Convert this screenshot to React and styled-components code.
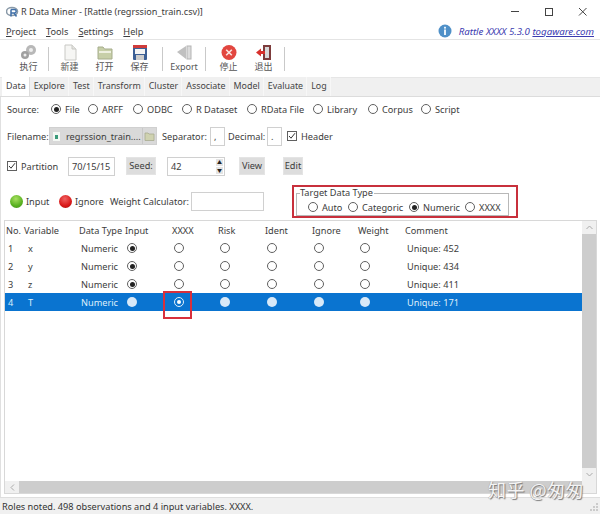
import React from "react";
import styled, { createGlobalStyle } from "styled-components";

const Global = createGlobalStyle`
  html, body { margin: 0; padding: 0; background: #fff; }
  * { box-sizing: border-box; }
  body { font-family: "Noto Sans", "Noto Sans CJK SC", sans-serif; font-size: 9.2px; color: #3c3c3c; }
`;

const Win = styled.div`
  position: relative; width: 600px; height: 514px; overflow: hidden; background: #fff;
  display: flex; flex-direction: column;
`;
const TitleBar = styled.div`
  height: 23px; display: flex; align-items: center; padding: 0 0 0 6px; flex: none; font-size: 9.1px;
`;
const TitleText = styled.span`margin-left: 2px; flex: 1; white-space: nowrap;`;
const WinButtons = styled.div`display: flex; align-items: center;`;
const WinButton = styled.div`width: 34px; height: 22px; display: flex; align-items: center; justify-content: center; margin-right: ${p => p.$mr || 0}px;`;
const MenuBar = styled.div`
  height: 17px; display: flex; align-items: center; padding: 0 6px 0 6px; gap: 10px; flex: none;
  border-bottom: 1px solid #e4e4e4;
`;
const MenuItem = styled.span`display: inline-block; &::first-letter { text-decoration: underline; }`;
const Spacer = styled.div`flex: 1;`;
const About = styled.span`font-style: italic; color: #3b3bb0; margin-left: -3px; font-size: 9.7px; white-space: nowrap;`;
const AboutLink = styled.span`text-decoration: underline;`;
const Toolbar = styled.div`
  height: 37px; display: flex; align-items: center; padding-left: 11px; flex: none;
`;
const Tool = styled.div`
  width: ${p => p.$w || 35}px; display: flex; flex-direction: column; align-items: center; font-size: 9px; color: #555;
  line-height: 12px;
  svg { display: block; }
`;
const ToolSep = styled.div`width: 1px; height: 24px; background: #c9c9c9; margin: 0 ${p => p.$mr}px 0 ${p => p.$ml}px;`;
const TabBar = styled.div`
  height: 20px; background: #f0f0f0; display: flex; align-items: flex-end; padding-left: 2px; flex: none;
  border-top: 1px solid #e6e6e6; border-bottom: 1px solid #dcdcdc;
`;
const Tab = styled.div`
  height: 19px; line-height: 18px; padding: 0 3px 0 4px; background: ${p => p.$active ? "#fff" : "#f0f0f0"};
  border-right: 1px solid ${p => p.$active ? "#dcdcdc" : "#f7f7f7"};
  color: #444; white-space: nowrap; font-size: 8.9px;
`;
const Content = styled.div`
  flex: 1; display: flex; flex-direction: column; min-height: 0;
  border-left: 1px solid #e0e0e0;
`;
const Row = styled.div`
  display: flex; align-items: center; height: ${p => p.$h}px; margin-top: ${p => p.$mt || 0}px; padding-left: ${p => p.$pl ?? 6}px; flex: none; white-space: nowrap;
`;
const Label = styled.span`display: inline-block; flex: none; width: ${p => p.$w ? p.$w + "px" : "auto"}; margin-left: ${p => p.$ml || 0}px;`;
const RadioCircle = styled.span`
  display: inline-block; width: 10px; height: 10px; border-radius: 50%; flex: none; background: #fff;
  border: 1px solid #606060; position: relative;
  &::after {
    content: ""; display: ${p => p.$on ? "block" : "none"}; position: absolute; left: 1.5px; top: 1.5px; width: 5px; height: 5px; border-radius: 50%; background: #222;
  }
`;
const RadioItem = styled.span`display: inline-flex; align-items: center; gap: 4px; flex: none; width: ${p => p.$w ? p.$w + "px" : "auto"};`;
const Check = styled.span`
  width: 10px; height: 10px; border: 1px solid #606060; display: inline-flex; align-items: center; justify-content: center; flex: none; background: #fff;
`;
const TextBox = styled.div`
  width: ${p => p.$w}px; height: 19px; border: 1px solid #d0d0d0; background: #fff; line-height: 17px; padding-left: 3px; flex: none;
  margin-right: ${p => p.$mr || 0}px;
`;
const Chooser = styled.div`
  width: 108px; height: 18px; background: #d9d9d9; border: 1px solid #d0d0d0; display: flex; align-items: center; padding-left: 3px; margin-right: 5px; flex: none;
`;
const ChooserText = styled.span`flex: 1; margin-left: 6px; overflow: hidden;`;
const ChooserEnd = styled.div`width: 14px; flex: none; height: 100%; border-left: 1px solid #c8c8c8; display: flex; align-items: center; justify-content: center;`;
const Btn = styled.div`
  height: 18px; width: ${p => p.$w}px; background: #dddddd; border: 1px solid #e4e4e4; line-height: 16px; text-align: center; flex: none;
  margin-right: ${p => p.$mr || 0}px;
`;
const Spin = styled.div`
  width: 58px; height: 19px; border: 1px solid #d0d0d0; margin: 0 14px 0 11px; display: flex; align-items: center; padding-left: 3px; flex: none;
`;
const SpinVal = styled.span`flex: 1;`;
const SpinArrows = styled.div`width: 7px; height: 15px; margin-right: 1px; display: flex; flex-direction: column; gap: 1px;`;
const SpinArrow = styled.div`flex: 1; background: #e4e4e4; display: flex; align-items: center; justify-content: center; color: #222; font-size: 5px; line-height: 1;`;
const Ball = styled.span`
  width: 13px; height: 13px; border-radius: 50%; flex: none; display: inline-block;
  background: radial-gradient(circle at 45% 30%, ${p => p.$a} 0%, ${p => p.$b} 60%, ${p => p.$c} 100%);
`;
const RedBox = styled.div`
  width: 226px; height: 33px; border: 2px solid #c8303c; margin-left: 28px; padding: 6px 2px 0 2px; flex: none;
`;
const Group = styled.div`
  position: relative; width: 213px; height: 23px; border: 1px solid #b8b8b8; display: flex; align-items: center; padding: 5px 0 0 11px;
`;
const GroupTitle = styled.span`position: absolute; left: 3px; top: -7px; background: #fff; line-height: 12px; padding: 0 1px 0 0;`;
const TablePanel = styled.div`
  flex: 1; margin: 2px 3px 3px; border: 1px solid #d8d8d8; display: grid; grid-template-columns: 1fr 14px; grid-template-rows: 1fr 12px; min-height: 0;
`;
const Sheet = styled.div`display: flex; flex-direction: column; min-height: 0; padding-top: 1px;`;
const GridRow = styled.div`
  display: grid; grid-template-columns: 19px 55px 46px 47px 46px 47px 47px 46px 47px 1fr;
  align-items: center; height: ${p => p.$h || 18}px; flex: none;
  background: ${p => p.$sel ? "#0a74d0" : "transparent"}; color: ${p => p.$sel ? "#dfeefa" : "inherit"};
`;
const Cell = styled.span`padding-left: ${p => p.$pl || 0}px; white-space: nowrap;`;
const RadioCell = styled.span`padding-left: 2px; display: flex; align-items: center;`;
const SelRadio = styled.span`
  width: 10px; height: 10px; border-radius: 50%; display: block; background: #d8e9f8;
`;
const SelRadioOn = styled.span`
  width: 10px; height: 10px; border-radius: 50%; display: block; background: #0a74d0; border: 1px solid #e6f2fb; position: relative;
  &::after { content: ""; position: absolute; left: 2px; top: 2px; width: 4px; height: 4px; border-radius: 50%; background: #fff; }
`;
const VScroll = styled.div`background: #f0f0f0; display: flex; flex-direction: column; align-items: center;`;
const ScrollEnd = styled.div`height: ${p => p.$h}px; width: 100%; display: flex; align-items: center; justify-content: center; flex: none; background: #f0f0f0;`;
const VThumb = styled.div`flex: 1; width: 100%; background: #cdcdcd;`;
const HScroll = styled.div`background: #f0f0f0; display: flex; align-items: stretch;`;
const HEnd = styled.div`width: 14px; flex: none; display: flex; align-items: center; justify-content: center;`;
const HThumb = styled.div`flex: 1; background: #cdcdcd;`;
const Corner = styled.div`background: #f0f0f0;`;
const StatusBar = styled.div`
  height: 17px; flex: none; display: flex; align-items: center; padding-left: 2px; background: #f0f0f0; border-top: 1px solid #dedede; position: relative; color: #333;
`;
const Grip = styled.svg`position: absolute; right: 2px; bottom: 2px;`;
const Marker = styled.div`
  position: absolute; left: 163px; top: 291px; width: 29px; height: 28px; border: 2px solid #d8303c; pointer-events: none;
`;
const Watermark = styled.div`
  position: absolute; left: 488px; top: 479px; font-size: 18px; line-height: 21px; color: #f4f4f4; white-space: nowrap; letter-spacing: 0.5px;
  text-shadow: 1px 1px 1px #777, -0.5px -0.5px 0 #aaa; font-family: "Noto Sans CJK SC", sans-serif;
`;

const Chk = () => (
  <Check><svg width="8" height="8" viewBox="0 0 8 8"><path d="M1 4l2 2.2L7 1.2" fill="none" stroke="#333" strokeWidth="1"/></svg></Check>
);
const Chev = ({ d }) => (
  <svg width="7" height="5" viewBox="0 0 7 5"><path d={d} fill="none" stroke="#aaa" strokeWidth="1"/></svg>
);

const tabs = ["Data", "Explore", "Test", "Transform", "Cluster", "Associate", "Model", "Evaluate", "Log"];
const rows = [["1", "x", "452"], ["2", "y", "434"], ["3", "z", "411"]];
const blanks = [0, 1, 2, 3, 4];
const selBlanks = [0, 1, 2, 3];

export default function App() {
  return (
    <Win>
      <Global />
      <TitleBar>
        <svg width="13" height="12" viewBox="0 0 13 12">
          <ellipse cx="6" cy="5.5" rx="5.5" ry="4" fill="none" stroke="#8a9aa8" strokeWidth="1.6"/>
          <path d="M5 3.5v7M5 3.5h3.5a1.6 1.6 0 0 1 0 3.4H5M8 7l2.5 3.5" fill="none" stroke="#3f6fa8" strokeWidth="1.5"/>
        </svg>
        <TitleText>R Data Miner - [Rattle (regrssion_train.csv)]</TitleText>
        <WinButtons>
          <WinButton><svg width="9" height="9" viewBox="0 0 9 9"><path d="M1 4.5h8" stroke="#444"/></svg></WinButton>
          <WinButton><svg width="9" height="9" viewBox="0 0 9 9"><rect x="1.5" y="1.5" width="7" height="7" fill="none" stroke="#444"/></svg></WinButton>
          <WinButton $mr={1}><svg width="9" height="9" viewBox="0 0 9 9"><path d="M1 1l7.5 7.5M8.5 1L1 8.5" stroke="#444"/></svg></WinButton>
        </WinButtons>
      </TitleBar>
      <MenuBar>
        <MenuItem>Project</MenuItem>
        <MenuItem>Tools</MenuItem>
        <MenuItem>Settings</MenuItem>
        <MenuItem>Help</MenuItem>
        <Spacer />
        <svg width="14" height="14" viewBox="0 0 14 14">
          <circle cx="7" cy="7" r="6.5" fill="#4f90c8"/>
          <rect x="6" y="5.5" width="2" height="5.5" fill="#e8f2fa"/>
          <rect x="6" y="2.8" width="2" height="1.8" fill="#e8f2fa"/>
        </svg>
        <About>Rattle XXXX 5.3.0 <AboutLink>togaware.com</AboutLink></About>
      </MenuBar>
      <Toolbar>
        <Tool>
          <svg width="18" height="17" viewBox="0 0 18 17">
            <circle cx="11" cy="6" r="5" fill="#b8b8b8"/><circle cx="11" cy="6" r="2" fill="#eee"/>
            <circle cx="5" cy="11" r="4" fill="#a0a0a0"/><circle cx="5" cy="11" r="1.5" fill="#eee"/>
          </svg>
          执行
        </Tool>
        <ToolSep $ml={2} $mr={3} />
        <Tool>
          <svg width="18" height="17" viewBox="0 0 18 17"><path d="M4 1h7l4 4v11H4z" fill="#f6f6f4" stroke="#c8c8c4"/><path d="M11 1v4h4" fill="#e4e4e0" stroke="#c8c8c4"/></svg>
          新建
        </Tool>
        <Tool>
          <svg width="18" height="17" viewBox="0 0 18 17"><path d="M2 3h5l1.5 2H16v10H2z" fill="#c7cfa8" stroke="#a6ad8c"/><path d="M3 7h12v2H3z" fill="#eef0e0"/></svg>
          打开
        </Tool>
        <Tool>
          <svg width="18" height="17" viewBox="0 0 18 17"><rect x="2" y="1" width="14" height="15" rx="1" fill="#3c5f95"/><rect x="2" y="1" width="14" height="3" fill="#cf3b3b"/><rect x="4" y="5" width="10" height="5" fill="#f4f4f4"/><rect x="5" y="11" width="8" height="5" fill="#ccc"/></svg>
          保存
        </Tool>
        <ToolSep $ml={5} $mr={3} />
        <Tool $w={36}>
          <svg width="18" height="17" viewBox="0 0 18 17"><path d="M2 8l9-6v13z" fill="#c0c0c0"/><rect x="12" y="2" width="4" height="13" fill="#dcdcdc" stroke="#b4b4b4"/></svg>
          Export
        </Tool>
        <ToolSep $ml={3} $mr={5} />
        <Tool>
          <svg width="18" height="17" viewBox="0 0 18 17"><circle cx="9" cy="8.5" r="7.5" fill="#e2463f"/><path d="M6.2 5.7l5.6 5.6M11.8 5.7l-5.6 5.6" stroke="#fbe4e0" strokeWidth="1.6"/></svg>
          停止
        </Tool>
        <Tool>
          <svg width="18" height="17" viewBox="0 0 18 17"><rect x="8" y="1" width="8" height="15" fill="#7d3c3c"/><rect x="10" y="3" width="4" height="11" fill="#d8d8d8"/><path d="M1 8.5l5-4v2.5h4v3H6v2.5z" fill="#d8302c"/></svg>
          退出
        </Tool>
        <ToolSep $ml={3} $mr={0} />
      </Toolbar>
      <TabBar>
        {tabs.map((t, i) => <Tab key={t} $active={i === 0}>{t}</Tab>)}
      </TabBar>
      <Content>
        <Row $h={22} $mt={1}>
          <Label $w={44}>Source:</Label>
          <RadioItem $w={37}><RadioCircle $on />File</RadioItem>
          <RadioItem $w={45}><RadioCircle />ARFF</RadioItem>
          <RadioItem $w={49}><RadioCircle />ODBC</RadioItem>
          <RadioItem $w={65}><RadioCircle />R Dataset</RadioItem>
          <RadioItem $w={66}><RadioCircle />RData File</RadioItem>
          <RadioItem $w={55}><RadioCircle />Library</RadioItem>
          <RadioItem $w={53}><RadioCircle />Corpus</RadioItem>
          <RadioItem><RadioCircle />Script</RadioItem>
        </Row>
        <Row $h={20} $mt={6}>
          <Label $w={42}>Filename:</Label>
          <Chooser>
            <svg width="7" height="9" viewBox="0 0 7 9"><rect width="7" height="9" fill="#f4f8f4"/><rect x="2" y="3" width="3" height="4" fill="#3a9a7a"/></svg>
            <ChooserText>regrssion_train....</ChooserText>
            <ChooserEnd><svg width="11" height="9" viewBox="0 0 11 9"><path d="M1 1h3l1 1h5v6.5H1z" fill="#cfd2b0" stroke="#a8ab90" strokeWidth=".8"/></svg></ChooserEnd>
          </Chooser>
          <Label $w={48}>Separator:</Label>
          <TextBox $w={15} $mr={3}>,</TextBox>
          <Label $w={39}>Decimal:</Label>
          <TextBox $w={15} $mr={5}>.</TextBox>
          <Chk />
          <Label $ml={4}>Header</Label>
        </Row>
        <Row $h={20} $mt={10}>
          <Chk />
          <Label $ml={4} $w={47}>Partition</Label>
          <TextBox $w={47} $mr={11}>70/15/15</TextBox>
          <Btn $w={30}>Seed:</Btn>
          <Spin>
            <SpinVal>42</SpinVal>
            <SpinArrows><SpinArrow>▲</SpinArrow><SpinArrow>▼</SpinArrow></SpinArrows>
          </Spin>
          <Btn $w={26} $mr={18}>View</Btn>
          <Btn $w={20}>Edit</Btn>
        </Row>
        <Row $h={33} $mt={9} $pl={9}>
          <Ball $a="#a8e060" $b="#58b020" $c="#3f8a18" />
          <Label $ml={3} $w={33}>Input</Label>
          <Ball $a="#f06060" $b="#d81818" $c="#a01010" />
          <Label $ml={3} $w={35}>Ignore</Label>
          <Label $w={81}>Weight Calculator:</Label>
          <TextBox $w={73}></TextBox>
          <RedBox>
            <Group>
              <GroupTitle>Target Data Type</GroupTitle>
              <RadioItem $w={40}><RadioCircle />Auto</RadioItem>
              <RadioItem $w={61}><RadioCircle />Categoric</RadioItem>
              <RadioItem $w={56}><RadioCircle $on />Numeric</RadioItem>
              <RadioItem><RadioCircle />XXXX</RadioItem>
            </Group>
          </RedBox>
        </Row>
        <TablePanel>
          <Sheet>
            <GridRow $h={17}>
              <Cell $pl={1}>No.</Cell><Cell>Variable</Cell><Cell>Data Type</Cell><Cell>Input</Cell><Cell>XXXX</Cell><Cell>Risk</Cell><Cell>Ident</Cell><Cell>Ignore</Cell><Cell>Weight</Cell><Cell>Comment</Cell>
            </GridRow>
            {rows.map(([n, v, u]) => (
              <GridRow key={n}>
                <Cell $pl={3}>{n}</Cell><Cell $pl={4}>{v}</Cell><Cell $pl={2}>Numeric</Cell>
                <RadioCell><RadioCircle $on /></RadioCell>
                {blanks.map(i => <RadioCell key={i}><RadioCircle /></RadioCell>)}
                <Cell $pl={2}>Unique: {u}</Cell>
              </GridRow>
            ))}
            <GridRow $sel>
              <Cell $pl={3}>4</Cell><Cell $pl={4}>T</Cell><Cell $pl={2}>Numeric</Cell>
              <RadioCell><SelRadio /></RadioCell>
              <RadioCell><SelRadioOn /></RadioCell>
              {selBlanks.map(i => <RadioCell key={i}><SelRadio /></RadioCell>)}
              <Cell $pl={2}>Unique: 171</Cell>
            </GridRow>
          </Sheet>
          <VScroll>
            <ScrollEnd $h={13}><Chev d="M.5 4L3.5 1l3 3" /></ScrollEnd>
            <VThumb />
            <ScrollEnd $h={13}><Chev d="M.5 1l3 3 3-3" /></ScrollEnd>
          </VScroll>
          <HScroll>
            <HEnd><svg width="5" height="7" viewBox="0 0 5 7"><path d="M4 .5l-3 3 3 3" fill="none" stroke="#aaa"/></svg></HEnd>
            <HThumb />
          </HScroll>
          <Corner />
        </TablePanel>
      </Content>
      <StatusBar>
        Roles noted. 498 observations and 4 input variables. XXXX.
        <Grip width="9" height="9" viewBox="0 0 9 9"><path d="M8 1v0M8 4v0M5 4v0M8 7v0M5 7v0M2 7v0" stroke="#aaa" strokeWidth="1.4" strokeLinecap="square"/></Grip>
      </StatusBar>
      <Marker />
      <Watermark>知乎 @匆匆</Watermark>
    </Win>
  );
}
